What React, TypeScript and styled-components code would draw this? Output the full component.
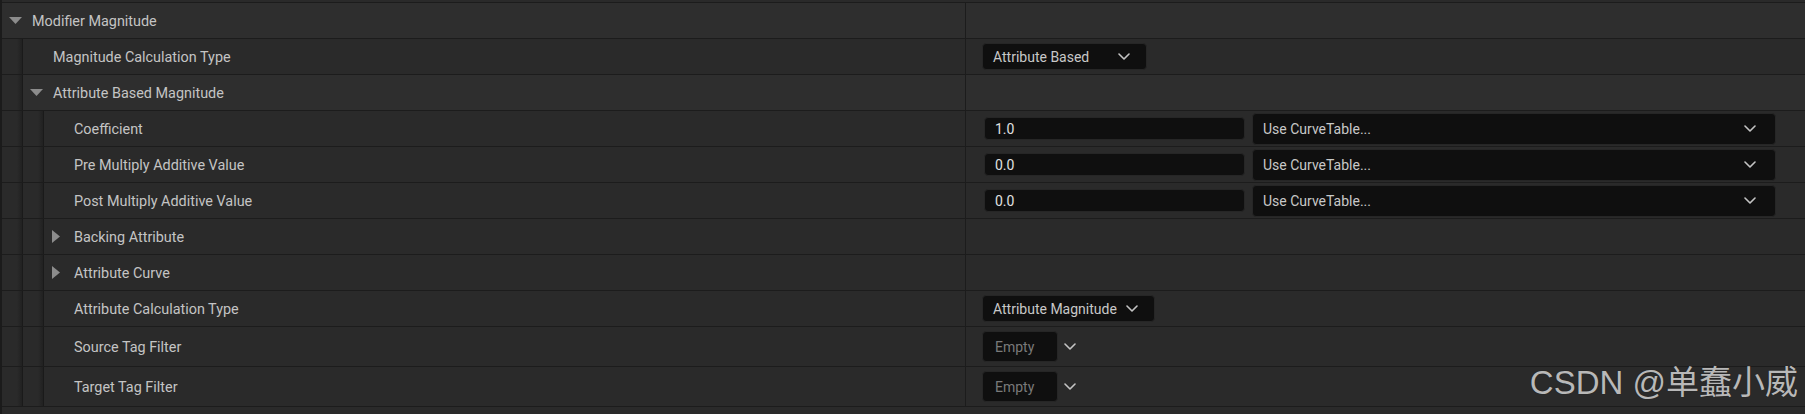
import React from "react";
import styled, { createGlobalStyle } from "styled-components";

const GlobalStyle = createGlobalStyle`
  html, body {
    margin: 0;
    padding: 0;
    background: #1a1a1a;
  }
  body {
    font-family: Roboto, "Noto Sans", sans-serif;
    width: 1805px;
    height: 414px;
    overflow: hidden;
  }
`;

const Panel = styled.div`
  position: relative;
  width: 1805px;
  height: 414px;
  box-sizing: border-box;
  padding-top: 2px;
  background: #2a2a2a;
  border-left: 2px solid #1b1b1b;
  overflow: hidden;
`;

const Row = styled.div<{ $h?: number; $header?: boolean }>`
  display: grid;
  grid-template-columns: 964px 1fr;
  height: ${(p) => p.$h ?? 36}px;
  box-sizing: border-box;
  border-top: 1px solid #1c1c1c;
  background: ${(p) => (p.$header ? "#2e2e2e" : "#2a2a2a")};
`;

const NameCell = styled.div`
  display: flex;
  align-items: stretch;
  border-right: 1px solid #1c1c1c;
  min-width: 0;
`;

const Indent = styled.div`
  width: 21px;
  flex-shrink: 0;
  box-sizing: border-box;
  border-right: 1px solid #1a1a1a;
  background: linear-gradient(to right, #2a2a2a 0, #2a2a2a 15px, #212121 20px);
`;

const NameContent = styled.div`
  display: flex;
  align-items: center;
  flex: 1;
  min-width: 0;
`;

const ArrowSlot = styled.div<{ $pad: number }>`
  width: 30px;
  flex-shrink: 0;
  box-sizing: border-box;
  padding-left: ${(p) => p.$pad}px;
  display: flex;
  align-items: center;
`;

const Label = styled.span`
  padding-top: 2px;
  font-size: 14.4px;
  color: #c4c4c4;
  white-space: nowrap;
`;

const ValueCell = styled.div`
  display: flex;
  align-items: center;
  gap: 7px;
  padding-left: 16px;
`;

const Combo = styled.div<{ $w?: number; $h?: number; $padR?: number }>`
  display: flex;
  align-items: center;
  justify-content: space-between;
  gap: 9px;
  box-sizing: border-box;
  width: ${(p) => (p.$w ? `${p.$w}px` : "auto")};
  height: ${(p) => p.$h ?? 27}px;
  padding: 0 ${(p) => p.$padR ?? 16}px 0 10px;
  background: #0f0f0f;
  border: 1px solid #262626;
  border-radius: 4px;
  font-size: 14px;
  color: #c8c8c8;
  white-space: nowrap;
`;

const NumberBox = styled.div`
  display: flex;
  align-items: center;
  box-sizing: border-box;
  width: 261px;
  height: 23px;
  margin-left: 2px;
  padding-left: 10px;
  background: #0f0f0f;
  border: 1px solid #262626;
  border-radius: 4px;
  font-size: 14px;
  color: #e0e0e0;
`;

const TagBox = styled.div`
  display: flex;
  align-items: center;
  box-sizing: border-box;
  width: 76px;
  height: 31px;
  padding-left: 12px;
  background: #0f0f0f;
  border: 1px solid #262626;
  border-radius: 4px;
  font-size: 14px;
  color: #7a7a7a;
`;

const TagPicker = styled.div`
  display: flex;
  align-items: center;
  gap: 6px;
`;

const Watermark = styled.div`
  position: absolute;
  right: 7px;
  bottom: 10px;
  font-family: "Liberation Sans", "Noto Sans CJK SC", sans-serif;
  font-size: 33px;
  color: #b8b8b8;
  text-shadow: 0 0 1px rgba(0, 0, 0, 0.4);
  white-space: nowrap;
  pointer-events: none;
`;

const Chevron = () => (
  <svg width="12" height="7" viewBox="0 0 12 7">
    <polyline
      points="1,1 6,6 11,1"
      fill="none"
      stroke="#c4c4c4"
      strokeWidth="1.6"
      strokeLinecap="round"
      strokeLinejoin="round"
    />
  </svg>
);

const ArrowDown = () => (
  <svg width="13" height="7" viewBox="0 0 13 7">
    <polygon points="0,0 13,0 6.5,7" fill="#8c8c8c" />
  </svg>
);

const ArrowRight = () => (
  <svg width="8" height="13" viewBox="0 0 8 13">
    <polygon points="0,0 8,6.5 0,13" fill="#8c8c8c" />
  </svg>
);

type Prop = {
  label: string;
  depth: number;
  header?: boolean;
  arrow?: "down" | "right";
  h?: number;
  value?: React.ReactNode;
};

const PropRow = ({ label, depth, header, arrow, h, value }: Prop) => (
  <Row $h={h} $header={header}>
    <NameCell>
      {Array.from({ length: depth }).map((_, i) => (
        <Indent key={i} />
      ))}
      <NameContent>
        <ArrowSlot $pad={arrow === "right" ? 8 : 7}>
          {arrow === "down" && <ArrowDown />}
          {arrow === "right" && <ArrowRight />}
        </ArrowSlot>
        <Label>{label}</Label>
      </NameContent>
    </NameCell>
    <ValueCell>{value}</ValueCell>
  </Row>
);

const ScalableValue = ({ num }: { num: string }) => (
  <>
    <NumberBox>{num}</NumberBox>
    <Combo $w={524} $h={32} $padR={19}>
      <span>Use CurveTable...</span>
      <Chevron />
    </Combo>
  </>
);

const TagValue = () => (
  <TagPicker>
    <TagBox>Empty</TagBox>
    <Chevron />
  </TagPicker>
);

export default function App() {
  return (
    <>
      <GlobalStyle />
      <Panel>
        <PropRow label="Modifier Magnitude" depth={0} header arrow="down" />
        <PropRow
          label="Magnitude Calculation Type"
          depth={1}
          value={
            <Combo $w={165}>
              <span>Attribute Based</span>
              <Chevron />
            </Combo>
          }
        />
        <PropRow label="Attribute Based Magnitude" depth={1} header arrow="down" />
        <PropRow label="Coefficient" depth={2} value={<ScalableValue num="1.0" />} />
        <PropRow
          label="Pre Multiply Additive Value"
          depth={2}
          value={<ScalableValue num="0.0" />}
        />
        <PropRow
          label="Post Multiply Additive Value"
          depth={2}
          value={<ScalableValue num="0.0" />}
        />
        <PropRow label="Backing Attribute" depth={2} arrow="right" />
        <PropRow label="Attribute Curve" depth={2} arrow="right" />
        <PropRow
          label="Attribute Calculation Type"
          depth={2}
          value={
            <Combo>
              <span>Attribute Magnitude</span>
              <Chevron />
            </Combo>
          }
        />
        <PropRow label="Source Tag Filter" depth={2} h={40} value={<TagValue />} />
        <PropRow label="Target Tag Filter" depth={2} h={40} value={<TagValue />} />
        <Row $h={8} />
        <Watermark>CSDN @单蠢小威</Watermark>
      </Panel>
    </>
  );
}
